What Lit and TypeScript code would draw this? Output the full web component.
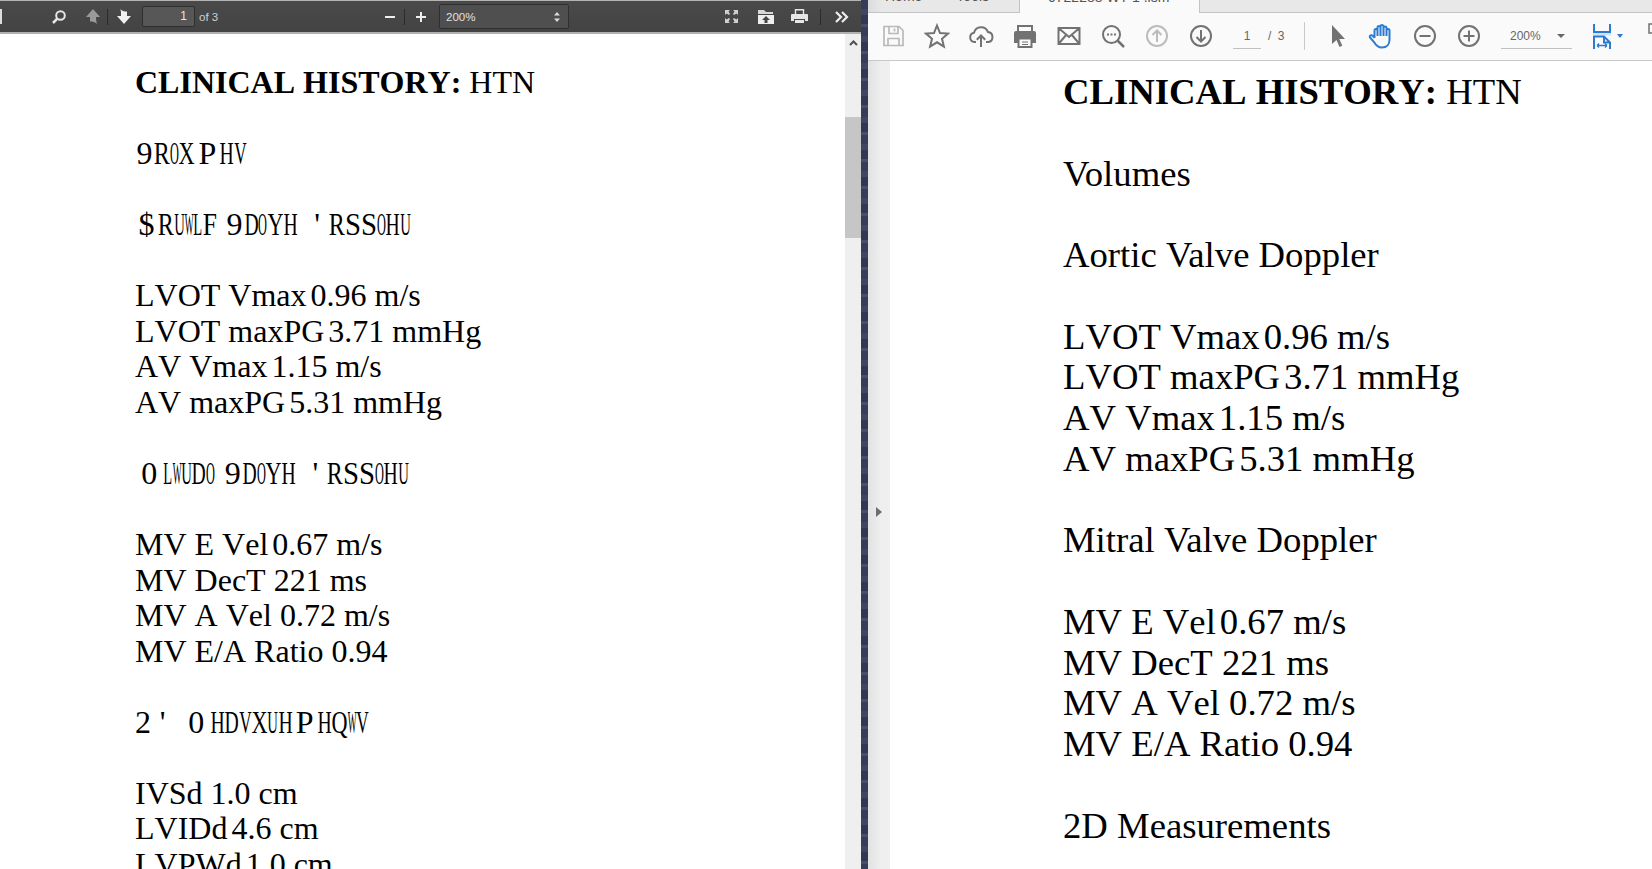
import { LitElement, html, css, svg } from "lit";
import { customElement } from "lit/decorators.js";

const W: Record<string, number> = {
  A: .722, D: .722, M: .889, V: .722, W: .944, "2": .5, $: .5, "'": .18, "0": .5, "9": .5,
  a: .444, c: .444, e: .444, i: .278, l: .278, m: .778, n: .5, o: .5, p: .5, r: .333, s: .389, t: .278, u: .5, v: .5,
  R: .667, U: .722, L: .611, F: .556, O: .722, Y: .722, H: .722, S: .556, P: .556, X: .722, Q: .722,
};
const KERN: Record<string, number> = { Vo: .129, Va: .111 };

function garbled(src: string, size: number) {
  const chars = [...src];
  return html`<div class="line">${chars.map((c, i) => {
    if (c === " ") return html`<span class="g" style="width:${0.25 * size}px"></span>`;
    const mapped = c === "2" ? "2" : String.fromCharCode(c.charCodeAt(0) - 29);
    const gw = W[mapped] ?? .5;
    const w = (W[c] ?? .5) - (KERN[c + chars[i + 1]] ?? 0);
    const scale = Math.min(1, w / gw);
    return html`<span class="g" style="width:${w * size}px"><span class="gi" style="transform:scaleX(${scale.toFixed(3)})">${mapped}</span></span>`;
  })}</div>`;
}

const dataA = [["LVOT Vmax", "0.96 m/s"], ["LVOT maxPG", "3.71 mmHg"], ["AV Vmax", "1.15 m/s"], ["AV maxPG", "5.31 mmHg"]];
const dataB = [["MV E Vel", "0.67 m/s"]];
const plainB = ["MV DecT 221 ms", "MV A Vel 0.72 m/s", "MV E/A Ratio 0.94"];

function measure(r: string[]) {
  return html`<div class="line">${r[0]}<span class="tight"></span>${r[1]}</div>`;
}

function doc(size: number, left: boolean) {
  return html`
    <div class="line"><b>CLINICAL HISTORY:</b> HTN</div>
    <div class="line">&nbsp;</div>
    ${left ? garbled("Volumes", size) : html`<div class="line"><span class="kvo">V</span>olumes</div>`}
    <div class="line">&nbsp;</div>
    ${left ? garbled("Aortic Valve Doppler", size) : html`<div class="line">Aortic <span class="kva">V</span>alve Doppler</div>`}
    <div class="line">&nbsp;</div>
    ${dataA.map(measure)}
    <div class="line">&nbsp;</div>
    ${left ? garbled("Mitral Valve Doppler", size) : html`<div class="line">Mitral <span class="kva">V</span>alve Doppler</div>`}
    <div class="line">&nbsp;</div>
    ${dataB.map(measure)}
    ${plainB.map((t) => html`<div class="line">${t}</div>`)}
    <div class="line">&nbsp;</div>
    ${left ? garbled("2D Measurements", size) : html`<div class="line">2D Measurements</div>`}
    <div class="line">&nbsp;</div>
    ${left ? html`
      <div class="line">IVSd 1.0 cm</div>
      ${measure(["LVIDd", "4.6 cm"])}
      ${measure(["LVPWd", "1.0 cm"])}
    ` : html``}
  `;
}

const darkIcon = (w: number, body: unknown, h = 18) => html`<svg width=${w} height=${h} viewBox="0 0 ${w} ${h}">${body}</svg>`;
const I = (body: unknown) => html`<span class="ri"><svg width="26" height="26" viewBox="0 0 26 26" fill="none" stroke="#727272" stroke-width="2">${body}</svg></span>`;

@customElement("app-root")
export class AppRoot extends LitElement {
  static styles = css`
    :host { display: block; width: 1652px; height: 869px; overflow: hidden; background: #fff; }
    .root { display: flex; width: 1652px; height: 869px; overflow: hidden; }
    .left { width: 861px; display: flex; flex-direction: column; flex: none; }
    .strip { width: 7px; flex: none; background: repeating-linear-gradient(180deg, #363c5c 0 9px, #3e4666 9px 15px, #323853 15px 24px, #474e6c 24px 27px); }
    .right { flex: 1; min-width: 0; display: flex; flex-direction: column; }

    .ltb { height: 34px; flex: none; box-sizing: border-box; display: flex; align-items: center; color: #ddd;
      background: linear-gradient(180deg, #4a4a4a, #434343); border-top: 1px solid #b4b4b4; border-bottom: 2px solid #b0b0b0;
      font: 12px "Liberation Sans", sans-serif; }
    .stub { width: 2px; height: 15px; background: #ddd; flex: none; }
    .ltb svg { display: block; flex: none; }
    .sp { flex: none; }
    .vsep { width: 1px; height: 16px; background: #2b2b2b; flex: none; }
    .pageinput { width: 53px; height: 21px; box-sizing: border-box; border: 1px solid #2f2f2f; border-radius: 2px; background: #575757;
      text-align: right; padding: 2px 7px 0 0; font-size: 12px; color: #e6e6e6; flex: none; }
    .of { margin-left: 4px; font-size: 11.5px; width: 30px; flex: none; color: #d0d0d0; }
    .zoomsel { width: 130px; height: 25px; box-sizing: border-box; border: 1px solid #2f2f2f; border-radius: 2px; background: #4f4f4f;
      display: flex; align-items: center; justify-content: space-between; padding: 0 8px 0 6px; font-size: 11.5px; color: #e0e0e0; flex: none; }

    .lbody { flex: 1; min-height: 0; display: flex; }
    .ldoc { flex: 1; min-width: 0; overflow: hidden; padding: 31px 0 0 135px; font: 32px/35.55px "Liberation Serif", serif; font-kerning: none; color: #000; white-space: nowrap; }
    .sb { width: 16px; flex: none; background: #efefef; display: flex; flex-direction: column; align-items: center; }
    .sbup { height: 16px; box-sizing: border-box; flex: none; padding-top: 6px; }
    .sbup svg { display: block; }
    .thumb { width: 16px; height: 121px; background: #c6c6c6; margin-top: 67px; flex: none; }

    .line { height: 35.55px; display: block; white-space: pre; }
    .rdoc .line { height: 40.75px; }
    .tight { display: inline-block; width: 4px; }
    .kvo { letter-spacing: -.129em; }
    .kva { letter-spacing: -.111em; }
    .g { display: inline-flex; justify-content: center; white-space: nowrap; }
    .gi { display: block; flex: none; transform-origin: 50% 50%; }

    .tabs { height: 13px; flex: none; display: flex; background: #e8e8e8; overflow: hidden; font: 14px "Liberation Sans", sans-serif; color: #555; }
    .tab { display: flex; align-items: flex-end; flex: none; height: 13px; box-sizing: border-box; overflow: hidden; border-bottom: 1px solid #c4c4c4; }
    .tab span { margin-bottom: 8px; line-height: 16px; display: block; flex: none; }
    .t1 { width: 152px; padding-left: 17px; gap: 34px; border-right: 1px solid #c4c4c4; background: linear-gradient(90deg, #dcdcdc, #e8e8e8 14px); }
    .t2 { width: 180px; background: #fafafa; border-bottom: none; padding-left: 28px; border-right: 1px solid #c4c4c4; }
    .t3 { flex: 1; }

    .rtb { height: 48px; flex: none; box-sizing: border-box; background: #fafafa; border-bottom: 1px solid #c8c8c8; display: flex; align-items: center; padding: 0 0 1px 3px; overflow: hidden;
      font: 12px "Liberation Sans", sans-serif; color: #666; }
    .ri { width: 44px; height: 44px; flex: none; display: flex; align-items: center; justify-content: center; }
    .ri svg { display: block; }
    .rinput { flex: none; height: 26px; box-sizing: border-box; border-bottom: 1px solid #c0c0c0; display: flex; align-items: center; justify-content: center; }
    .rsep { width: 1px; height: 28px; background: #c8c8c8; flex: none; }
    .pg { width: 28px; margin-left: 10px; margin-right: 7px; }
    .tot { width: 24px; word-spacing: 3px; flex: none; }
    .zm { width: 71px; justify-content: space-between; padding: 0 7px 0 9px; margin-left: 10px; color: #666; }
    .caret { width: 0; height: 0; border-left: 4px solid transparent; border-right: 4px solid transparent; border-top: 4px solid #666; flex: none; }
    .caretblue { border-top-color: #2d7bd0; border-left-width: 3.5px; border-right-width: 3.5px; }
    .fit { flex: none; }
    .edge { flex: none; margin-top: -12px; }

    .rbody { flex: 1; min-height: 0; display: flex; }
    .rside { width: 22px; flex: none; background: linear-gradient(90deg, #e2e2e2, #efefef 60%); box-sizing: border-box; padding: 446px 0 0 8px; }
    .tri { display: block; width: 0; height: 0; border-top: 5.5px solid transparent; border-bottom: 5.5px solid transparent; border-left: 6px solid #6e6e6e; }
    .rdoc { flex: 1; min-width: 0; overflow: hidden; padding: 11px 0 0 173px; font: 36.7px/40.75px "Liberation Serif", serif; font-kerning: none; color: #000; white-space: nowrap; }
  `;

  render() {
    return html`<div class="root">
      <div class="left">
        <div class="ltb">
          <span class="stub"></span>
          <span class="sp" style="width:49px"></span>
          ${darkIcon(16, svg`<circle cx="9.500" cy="6.500" r="4.300" fill="none" stroke="#e6e6e6" stroke-width="2"/><path d="M6.300 9.700 2 14" stroke="#e6e6e6" stroke-width="2.600"/>`, 16)}
          <span class="sp" style="width:18px"></span>
          ${darkIcon(16, svg`<path d="M8 0 15 8H11C11 11 11.500 13 12 15 10 13 8 12.500 5 12.500V8H1Z" fill="#9a9a9a"/>`, 15)}
          <span class="sp" style="width:6px"></span><span class="vsep"></span><span class="sp" style="width:8px"></span>
          ${darkIcon(16, svg`<path d="M8 15 1 7H5V3C5 2 4.500 1 4 0 6 2 8 2.500 11 2.500V7H15Z" fill="#f0f0f0"/>`, 15)}
          <span class="sp" style="width:10px"></span>
          <div class="pageinput">1</div>
          <div class="of">of 3</div>
          <span class="sp" style="width:155px"></span>
          ${darkIcon(12, svg`<path d="M1 6h10" stroke="#eee" stroke-width="2"/>`, 12)}
          <span class="sp" style="width:8px"></span><span class="vsep"></span><span class="sp" style="width:10px"></span>
          ${darkIcon(12, svg`<path d="M1 6h10M6 1v10" stroke="#eee" stroke-width="2"/>`, 12)}
          <span class="sp" style="width:12px"></span>
          <div class="zoomsel"><span>200%</span>${darkIcon(6, svg`<path d="M0 3.500 3 0 6 3.500ZM0 6.500 3 10 6 6.500Z" fill="#ddd"/>`, 10)}</div>
          <span class="sp" style="width:155px"></span>
          ${darkIcon(15, svg`<path d="M1 1h5L4.500 2.600 6 5 5 6 2.600 4.500 1 6ZM14 1H9l1.500 1.600L9 5l1 1 2.400-1.500L14 6ZM1 14h5l-1.500-1.600L6 10 5 9l-2.400 1.500L1 9ZM14 14H9l1.500-1.600L9 10l1-1 2.400 1.500L14 9Z" fill="#d0d0d0"/>`, 15)}
          <span class="sp" style="width:19px"></span>
          ${darkIcon(16, svg`<path d="M0 3V1h6l2 2h7v2H0Z" fill="#d8d8d8"/><path d="M0 6h16v9H0ZM8 7 4 11h2.500v3h3v-3H12Z" fill="#eee" fill-rule="evenodd"/>`, 16)}
          <span class="sp" style="width:17px"></span>
          ${darkIcon(17, svg`<path d="M4.500 .7h8v5h-8Z" fill="none" stroke="#e6e6e6" stroke-width="1.400"/><path d="M1 5h15a1 1 0 0 1 1 1v6h-3v-2H3v2H0V6a1 1 0 0 1 1-1ZM4 11h9v3H4Z" fill="#e6e6e6"/>`, 15)}
          <span class="sp" style="width:12px"></span><span class="vsep"></span><span class="sp" style="width:14px"></span>
          ${darkIcon(14, svg`<path d="M1 1l5 5-5 5M7 1l5 5-5 5" fill="none" stroke="#eee" stroke-width="2.200"/>`, 12)}
        </div>
        <div class="lbody">
          <div class="ldoc">${doc(32, true)}</div>
          <div class="sb">
            <div class="sbup">${darkIcon(9, svg`<path d="M1 5l3.500-3.500L8 5" fill="none" stroke="#505050" stroke-width="2"/>`, 6)}</div>
            <div class="thumb"></div>
          </div>
        </div>
      </div>
      <div class="strip"></div>
      <div class="right">
        <div class="tabs">
          <div class="tab t1"><span>Home</span><span>Tools</span></div>
          <div class="tab t2"><span>0722288 WT-1 .ism</span></div>
          <div class="tab t3"></div>
        </div>
        <div class="rtb">
          <span class="ri"><svg width="26" height="26" viewBox="0 0 26 26" fill="none" stroke="#b9b9b9" stroke-width="1.700"><path d="M4 3.500h15l4 4v15H4ZM9 3.500v7h9v-7M14.500 5.500v3M8 22.500v-7h11v7"/></svg></span>
          ${I(svg`<path d="M13 2.500l3 7.500 8 .6-6 5.200 1.900 7.800L13 19.300l-6.900 4.300L8 15.800l-6-5.200 8-.6Z"/>`)}
          ${I(svg`<path d="M8 19H6.500a4.700 4.700 0 0 1-.5-9.300 7.300 7.300 0 0 1 14-.6 5 5 0 0 1 .3 9.900H18M13 24V13M8.800 16.800 13 12.500l4.200 4.300"/>`)}
          ${I(svg`<path d="M6 9V3h14v6" stroke-width="2"/><path d="M4 8h18a2 2 0 0 1 2 2v10h-4v-3H6v3H2V10a2 2 0 0 1 2-2Z" fill="#727272" stroke="none"/><path d="M6.500 15.500h13V24h-13Z" fill="#fafafa"/><path d="M10 19h6M10 21.500h6" stroke-width="1.200"/>`)}
          ${I(svg`<path d="M2.500 5h21v16h-21ZM2.500 5 13 14 23.500 5M2.500 21l8-9.500M23.500 21l-8-9.500"/>`)}
          ${I(svg`<circle cx="11.500" cy="11.500" r="8.500"/><path d="M17.500 17.500 24 24" stroke-width="2.500"/><path d="M7 11.500h2M10.500 11.500h2M14 11.500h2" stroke-width="1.800"/>`)}
          <span class="ri"><svg width="26" height="26" viewBox="0 0 26 26" fill="none" stroke="#bcbcbc" stroke-width="2"><circle cx="13" cy="13" r="10"/><path d="M13 19V7.500M8.500 12 13 7.500l4.500 4.500"/></svg></span>
          ${I(svg`<circle cx="13" cy="13" r="10"/><path d="M13 7v11.500M8.500 14l4.500 4.500 4.500-4.500"/>`)}
          <div class="rinput pg">1</div>
          <span class="tot">/ 3</span>
          <span class="sp" style="width:12px"></span>
          <span class="rsep"></span>
          <span class="sp" style="width:10px"></span>
          <span class="ri"><svg width="26" height="26" viewBox="0 0 26 26"><path d="M8 2v19l4.500-4 3 7 2.800-1.200-3-6.800H21Z" fill="#727272"/></svg></span>
          <span class="ri"><svg width="26" height="26" viewBox="0 0 26 26" fill="none" stroke="#2d7bd0" stroke-width="2"><path d="M6.500 15V7.500a1.500 1.500 0 0 1 3 0V13M9.500 13V4.500a1.500 1.500 0 0 1 3 0V13M12.500 13V3.500a1.500 1.500 0 0 1 3 0V13M15.500 13V5a1.500 1.500 0 0 1 3 0V13M18.500 13V7.500a1.500 1.500 0 0 1 3 0V17c0 4.500-3 7.500-7.500 7.500-4 0-6-2-8-5.500L2 14.500c-1-2 1.500-3 3-1.500l1.500 2"/></svg></span>
          ${I(svg`<circle cx="13" cy="13" r="10"/><path d="M7.500 13h11"/>`)}
          ${I(svg`<circle cx="13" cy="13" r="10"/><path d="M7.500 13h11M13 7.500v11"/>`)}
          <div class="rinput zm"><span>200%</span><span class="caret"></span></div>
          <span class="sp" style="width:21px"></span>
          <svg class="fit" width="18" height="25" viewBox="0 0 18 25" fill="none"><path d="M0 9h18v2.500H0Z" fill="#cfe2f5"/><path d="M1 0v8h16V0M1 25V12.500h10l6 6V25M11 12.500v6h6" stroke="#2d7bd0" stroke-width="2"/><path d="M4 21.500h10M4 21.500l2-2M4 21.500l2 2M14 21.500l-2-2M14 21.500l-2 2" stroke="#2d7bd0" stroke-width="1.300"/></svg>
          <span class="sp" style="width:6px"></span>
          <span class="caret caretblue"></span>
          <span class="sp" style="width:25px"></span>
          <svg class="edge" width="8" height="14" viewBox="0 0 8 14" fill="none" stroke="#727272" stroke-width="1.500"><path d="M1 1h8v9H1Z"/></svg>
        </div>
        <div class="rbody">
          <div class="rside"><span class="tri"></span></div>
          <div class="rdoc">${doc(36.7, false)}</div>
        </div>
      </div>
    </div>`;
  }
}
